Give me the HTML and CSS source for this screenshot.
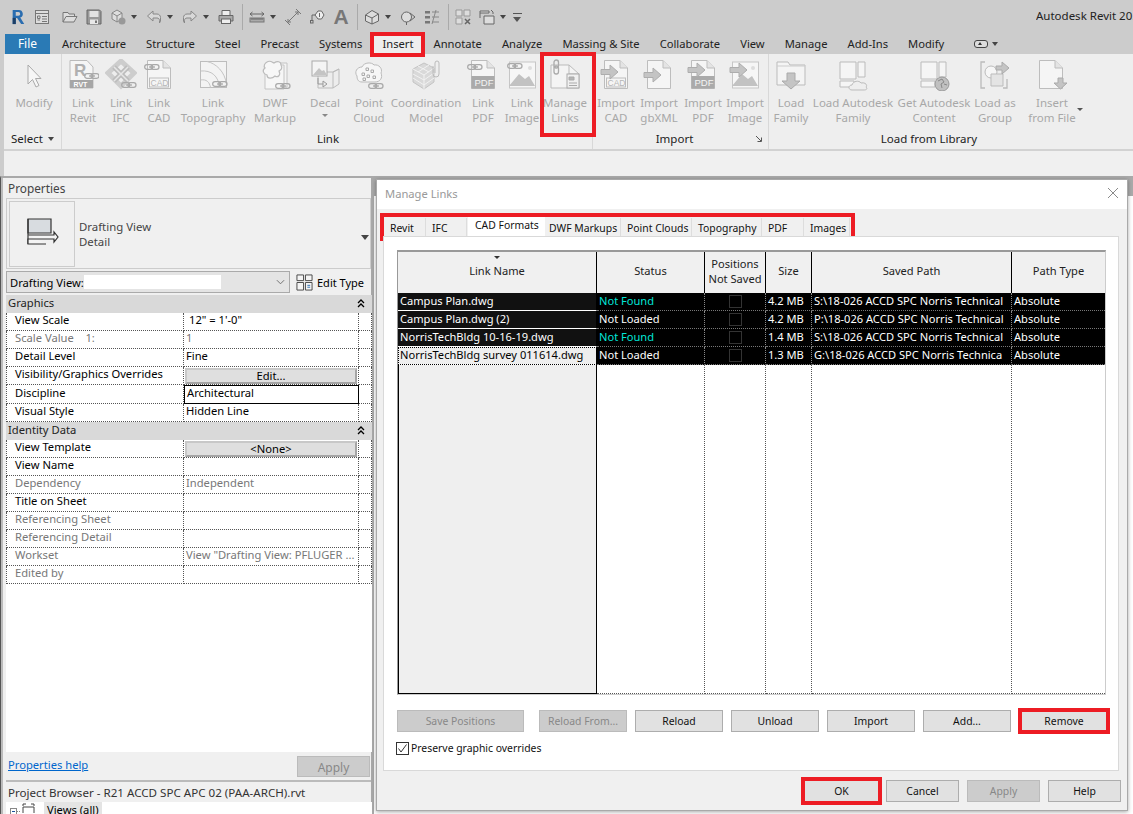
FILE: index.html
```html
<!DOCTYPE html>
<html lang="en">
<head>
<meta charset="utf-8">
<title>Manage Links</title>
<link rel="stylesheet" href="styles.css">
</head>
<body>
<svg class="defs" aria-hidden="true">
  <defs>
    <g id="chain" fill="none" stroke="#a9a9a9" stroke-width="1.3"><rect x=".7" y=".7" width="8" height="4.6" rx="2.3"/><rect x="7" y=".7" width="8" height="4.6" rx="2.3"/><path d="M5 3h6"/></g>
    <g id="doc"><path d="M4.5 1.5H20L27.5 9V29.5H4.5Z" fill="#f5f5f5" stroke="#bdbdbd"/><path d="M20 1.5V9H27.5" fill="#e4e4e4" stroke="#bdbdbd"/></g>
    <g id="arrowr"><path d="M1 10.5H10V6L18 13L10 20V15.5H1Z" fill="#c4c4c4" stroke="#adadad"/></g>
    <g id="mount"><path d="M3 27 13 15l6 5 4-3 6 10Z" fill="#c2c2c2"/></g>
  </defs>
</svg>
<div class="page">
  <header class="qat">
    <svg class="qi" viewBox="0 0 16 18"><path d="M2 1h7a4.500 4.500 0 0 1 1.500 8.700L15 17h-3.500L7 10H5.500v7H2Z" fill="#2a6db0"/><path d="M2 10h3.500v7H2Z" fill="#1c3e66"/><path d="M5.500 3.500v4H8.500a2 2 0 0 0 0-4Z" fill="#ccc"/></svg>
    <svg class="qi" viewBox="0 0 16 16"><rect x="1.500" y="1.500" width="13" height="13" fill="#ddd" stroke="#777"/><path d="M1.500 4.500h13M3.500 7h2.500v2.500H3.500ZM3.500 11h2.500M8 7.500h5M8 10h5M8 12.500h5" stroke="#777" fill="none"/></svg>
    <svg class="qi sp4" viewBox="0 0 16 16"><path d="M1 13V3.500h5l1 1.500h5.500v2.500M1 13l3-5.500h11L12 13Z" fill="#ddd" stroke="#777"/></svg>
    <svg class="qi" viewBox="0 0 16 16"><path d="M1 1h12.500L15 2.500V15H1Z" fill="#999" stroke="#666"/><rect x="3.500" y="2" width="9" height="6" fill="#e2e2e2"/><rect x="4" y="10.500" width="8" height="4.500" fill="#e8e8e8"/><rect x="9" y="11.500" width="2" height="2.500" fill="#777"/></svg>
    <svg class="qi" viewBox="0 0 16 16"><path d="M2 4l5-3 5 3v6l-5 3-5-3Z" fill="#ddd" stroke="#888"/><path d="M2 4l5 3 5-3M7 7v6" fill="none" stroke="#888"/><circle cx="12" cy="12" r="3.500" fill="#999"/></svg>
    <i class="caret"></i>
    <svg class="qi" viewBox="0 0 16 16"><path d="M7 2 1.500 7 7 12V9h4c1.500 0 2.500 1 2.500 2.500V14l1-2V8.500C14.500 6.500 13 5 11 5H7Z" fill="#d8d8d8" stroke="#888"/></svg>
    <i class="caret"></i>
    <svg class="qi" viewBox="0 0 16 16"><path d="M9 2 14.500 7 9 12V9H5c-1.500 0-2.500 1-2.500 2.500V14l-1-2V8.500C1.500 6.500 3 5 5 5h4Z" fill="#d8d8d8" stroke="#888"/></svg>
    <i class="caret"></i>
    <svg class="qi" viewBox="0 0 16 16"><path d="M4 6V1.500h8V6" fill="#eee" stroke="#666"/><path d="M1 6.500h14V12H1Z" fill="#aaa" stroke="#666"/><rect x="3.500" y="10" width="9" height="4.500" fill="#eee" stroke="#666"/></svg>
    <i class="qsep"></i>
    <svg class="qi" viewBox="0 0 16 16"><path d="M1 5h14M3.500 3 1 5l2.500 2M12.500 3 15 5l-2.500 2" fill="none" stroke="#666"/><rect x="1" y="9" width="14" height="4" fill="#aaa" stroke="#777"/><path d="M3 9v2M5 9v2M7 9v2M9 9v2M11 9v2M13 9v2" stroke="#666"/></svg>
    <i class="caret"></i>
    <svg class="qi" viewBox="0 0 16 16"><path d="M3 13 13 3M6 13H3v-3M10 3h3v3M0 11l5 5M11 0l5 5" fill="none" stroke="#777"/></svg>
    <svg class="qi" viewBox="0 0 16 16"><path d="M3 12V6h3" fill="none" stroke="#666"/><rect x="1.500" y="11.500" width="2.500" height="2.500" fill="none" stroke="#666"/><path d="M6 6l3-4h3.500L15 6l-2.500 4H9Z" fill="#eee" stroke="#666"/><path d="M10.500 4v4" stroke="#666"/></svg>
    <span class="qa">A</span>
    <i class="qsep"></i>
    <svg class="qi" viewBox="0 0 16 16"><path d="M1.500 6 8 1.500 14.500 5v7L8 15l-6.500-3Z" fill="#ddd" stroke="#666"/><path d="M1.500 6 8 9l6.500-4M8 9v6" fill="none" stroke="#666"/></svg>
    <i class="caret"></i>
    <svg class="qi" viewBox="0 0 16 16"><circle cx="6.500" cy="8" r="5" fill="#ddd" stroke="#666"/><path d="M10 4l5 4-5 4M6.500 13v3" fill="none" stroke="#666"/></svg>
    <svg class="qi" viewBox="0 0 16 16"><path d="M1 2h5v2.500H1ZM1 7h5v2.500H1ZM1 12h5v2.500H1Z" fill="#777"/><path d="M8 3h7M8 8h7M8 13h7M12 1 8 15" fill="none" stroke="#888"/></svg>
    <i class="qsep"></i>
    <svg class="qi" viewBox="0 0 16 16"><path d="M1 1h6v6H1ZM9 1h6v6H9ZM1 9h6v6H1Z" fill="#ddd" stroke="#999"/><path d="M10 10l5 5M15 10l-5 5" stroke="#666" stroke-width="1.500"/></svg>
    <svg class="qi" viewBox="0 0 16 16"><path d="M1 2h9v2H1ZM5 7h10v8H5Z" fill="#ddd" stroke="#666"/><path d="M1 4v5M12 1l2 2v2" fill="none" stroke="#666"/></svg>
    <i class="caret"></i>
    <span class="qmenu"></span>
    <div class="apptitle">Autodesk Revit 20.</div>
  </header>

  <nav class="tabs">
    <a class="file">File</a>
    <a>Architecture</a><a>Structure</a><a>Steel</a><a>Precast</a><a>Systems</a>
    <a class="active hl">Insert</a>
    <a>Annotate</a><a>Analyze</a><a>Massing &amp; Site</a><a>Collaborate</a><a>View</a><a>Manage</a><a>Add-Ins</a><a>Modify</a>
    <span class="minimize"><i></i></span><i class="caret tabcaret"></i>
  </nav>

  <section class="ribbon">
    <div class="panel p-select">
      <div class="tools">
        <div class="tool w40">
          <svg class="ric" viewBox="0 0 32 32"><path d="M10 6V25L14.500 20.500 18 28 21 26.500 17.500 19.500H23Z" fill="#f6f6f6" stroke="#aaa"/></svg>
          <span>Modify</span>
        </div>
      </div>
      <div class="ptitle">Select<i class="caret"></i></div>
    </div>
    <div class="panel p-link">
      <div class="tools">
        <div class="tool w38">
          <svg class="ric" viewBox="0 0 32 32"><path d="M3 1.500H20L26 8V29H3Z" fill="#f5f5f5" stroke="#bbb"/><text class="glyph-p" x="7" y="17">R</text><rect x="3" y="21" width="23" height="8" fill="#a6a6a6"/><text class="glyph-w" x="6.500" y="28">RVT</text><use href="#chain" x="17" y="14"/></svg>
          <span>Link<br>Revit</span>
        </div>
        <div class="tool w38">
          <svg class="ric" viewBox="0 0 32 32"><path d="M16 2 29 14 16 27 3 14Z" fill="none" stroke="#cdcdcd" stroke-width="5"/><path d="M9 8l14 14M23 8 9 22" stroke="#bdbdbd" stroke-width="5" fill="none"/><path d="M9 8l14 14M23 8 9 22" stroke="#e6e6e6" stroke-width="1.500" fill="none"/><use href="#chain" x="16" y="23"/></svg>
          <span>Link<br>IFC</span>
        </div>
        <div class="tool w38">
          <svg class="ric" viewBox="0 0 32 32"><use href="#doc"/><rect x="6.500" y="19" width="19" height="9" fill="none" stroke="#bdbdbd"/><text class="glyph-c" x="7.500" y="27">CAD</text><use href="#chain" x="1" y="5"/></svg>
          <span>Link<br>CAD</span>
        </div>
        <div class="tool w70">
          <svg class="ric" viewBox="0 0 32 32"><rect x="3.500" y="2.500" width="26" height="26" fill="#f3f3f3" stroke="#bdbdbd"/><path d="M3.500 21c6-1 9 2 10 7.500M3.500 12c11-1 18 5 19 16.500M10 2.500c9 2 18 10 19.500 23" fill="none" stroke="#c4c4c4"/><use href="#chain" x="15" y="22"/></svg>
          <span>Link<br>Topography</span>
        </div>
        <div class="tool w54">
          <svg class="ric" viewBox="0 0 32 32"><path d="M9 4h19v24H9Z" fill="#f3f3f3" stroke="#c4c4c4"/><path d="M6 6h19v24H6Z" fill="#f6f6f6" stroke="#c4c4c4"/><path d="M8 3c3-2 5 0 7 1 3-2 7-2 7 2 2 3 0 5-2 6 2 4-1 7-4 5-3 3-8 3-8-1-4-1-5-5-2-7-2-2 0-5 2-6Z" fill="#f7f7f7" stroke="#bbb" stroke-width="1.200"/><use href="#chain" x="16" y="24"/></svg>
          <span>DWF<br>Markup</span>
        </div>
        <div class="tool w46">
          <svg class="ric" viewBox="0 0 32 32"><path d="M9 13h15l6-3v15l-6 4H9Z" fill="#ededed" stroke="#bbb"/><path d="M24 13v16M24 13l6-3" fill="none" stroke="#bbb"/><rect x="3" y="2" width="15" height="15" fill="#f4f4f4" stroke="#aaa"/><path d="M4 16l6-7 3 3 2-1 3 5Z" fill="#c4c4c4"/><path d="M9 19v6h5M14 22l4 3-4 3Z" fill="none" stroke="#999"/></svg>
          <span>Decal<br><b class="minicaret"></b></span>
        </div>
        <div class="tool w42">
          <svg class="ric" viewBox="0 0 32 32"><path d="M4 17c-3-4 0-9 5-9 2-5 10-5 12-2 5-1 9 4 7 8 2 5-1 9-6 9H9c-4 0-5-3-5-6Z" fill="#f6f6f6" stroke="#bbb"/><path d="M9 14h2.500v2.500H9ZM13 9h2.500v2.500H13ZM18 11h2.500v2.500H18ZM14 16h2.500v2.500H14ZM20 17h2.500v2.500H20ZM10 19h2.500v2.500H10Z" fill="none" stroke="#aaa"/><use href="#chain" x="15" y="24"/></svg>
          <span>Point<br>Cloud</span>
        </div>
        <div class="tool w72">
          <svg class="ric" viewBox="0 0 32 32"><path d="M14 4 24 9v14l-10 7L3 23V10Z" fill="#d9d9d9" stroke="#c4c4c4"/><path d="M3 10l11 6 10-7M14 16v14M3 15l11 6 10-7M3 19l11 7 10-7M8 7l11 6M19 6 8 13" fill="none" stroke="#f2f2f2"/><path d="M25 14V4a2 2 0 0 1 4 0v11a3 3 0 0 1-6 0V7" fill="none" stroke="#bbb"/></svg>
          <span>Coordination<br>Model</span>
        </div>
        <div class="tool w42">
          <svg class="ric" viewBox="0 0 32 32"><use href="#doc"/><rect x="4.500" y="17" width="23" height="12.500" fill="#aaa"/><text class="glyph-w2" x="7.500" y="27">PDF</text><use href="#chain" x="0" y="5"/></svg>
          <span>Link<br>PDF</span>
        </div>
        <div class="tool w36">
          <svg class="ric" viewBox="0 0 32 32"><rect x="3.500" y="3" width="26" height="26" fill="#f6f6f6" stroke="#c6c6c6"/><circle cx="24" cy="9" r="2" fill="#ddd"/><use href="#mount"/><use href="#chain" x="1" y="4"/></svg>
          <span>Link<br>Image</span>
        </div>
        <div class="tool manage hl">
          <svg class="ric" viewBox="0 0 32 32"><path d="M2 6H20L30 15V29H2Z" fill="#f4f4f4" stroke="#bbb"/><path d="M20 6v9h10" fill="none" stroke="#bbb"/><rect x="18" y="15" width="12" height="14" fill="#f0f0f0" stroke="#aaa"/><path d="M20 18h5v3h-5ZM20 24h8M20 26.500h8" fill="#b5b5b5" stroke="#aaa"/><g fill="none" stroke="#aaa" stroke-width="1.300"><rect x="5" y="1" width="4.500" height="8" rx="2.200"/><rect x="5" y="7" width="4.500" height="8" rx="2.200"/></g></svg>
          <span>Manage<br>Links</span>
        </div>
      </div>
      <div class="ptitle">Link</div>
    </div>
    <div class="panel p-import">
      <div class="tools">
        <div class="tool w42">
          <svg class="ric" viewBox="0 0 32 32"><use href="#doc"/><rect x="6.500" y="19" width="19" height="9" fill="none" stroke="#bdbdbd"/><text class="glyph-c" x="7.500" y="27">CAD</text><use href="#arrowr" x="0" y="0"/></svg>
          <span>Import<br>CAD</span>
        </div>
        <div class="tool w44">
          <svg class="ric" viewBox="0 0 32 32"><use href="#doc"/><use href="#arrowr" x="0" y="3"/></svg>
          <span>Import<br>gbXML</span>
        </div>
        <div class="tool w44">
          <svg class="ric" viewBox="0 0 32 32"><use href="#doc"/><rect x="4.500" y="17" width="23" height="12.500" fill="#aaa"/><text class="glyph-w2" x="7.500" y="27">PDF</text><use href="#arrowr" x="0" y="-2"/></svg>
          <span>Import<br>PDF</span>
        </div>
        <div class="tool w40">
          <svg class="ric" viewBox="0 0 32 32"><rect x="3.500" y="3" width="26" height="26" fill="#f6f6f6" stroke="#c6c6c6"/><circle cx="24" cy="9" r="2" fill="#ddd"/><use href="#mount"/><use href="#arrowr" x="0" y="-2"/></svg>
          <span>Import<br>Image</span>
        </div>
      </div>
      <div class="ptitle">Import<svg class="launcher" viewBox="0 0 8 8"><path d="M1 1l5 5M2.500 6.500h4v-4" fill="none" stroke="#555"/></svg></div>
    </div>
    <div class="panel p-library">
      <div class="tools">
        <div class="tool w44">
          <svg class="ric" viewBox="0 0 32 32"><path d="M2 26V3h11l2 3h15v20Z" fill="#f4f4f4" stroke="#bbb"/><path d="M2 7h28" stroke="#ccc"/><path d="M12 14h8v8h5l-9 8-9-8h5Z" fill="#c4c4c4" stroke="#aaa"/></svg>
          <span>Load<br>Family</span>
        </div>
        <div class="tool w80">
          <svg class="ric" viewBox="0 0 32 32"><path d="M3 3h16v17H3ZM21 3h7v15h-7ZM3 22h14v6H3Z" fill="#f5f5f5" stroke="#bbb"/><path d="M15 31c-4 0-4-5 0-5 1-4 7-5 9-2 4-1 7 2 5 4 2 2 0 3-2 3Z" fill="#eee" stroke="#bbb"/></svg>
          <span>Load Autodesk<br>Family</span>
        </div>
        <div class="tool w82">
          <svg class="ric" viewBox="0 0 32 32"><path d="M3 3h16v17H3ZM21 3h7v15h-7ZM3 22h14v6H3Z" fill="#f5f5f5" stroke="#bbb"/><circle cx="24" cy="25" r="7" fill="#c0c0c0" stroke="#999"/><path d="M20 22l4-2 2 3-3 2 1 4M26 25l3 1" fill="none" stroke="#888"/></svg>
          <span>Get Autodesk<br>Content</span>
        </div>
        <div class="tool w40">
          <svg class="ric" viewBox="0 0 32 32"><path d="M6 3H2v26h4M24 29h4V20" fill="none" stroke="#bbb" stroke-width="1.300"/><circle cx="12" cy="13" r="6" fill="#f6f6f6" stroke="#bbb"/><path d="M12 15h12v12H12Z" fill="#e4e4e4" stroke="#bbb"/><path d="M17 7h6V3l7 6-7 6v-4h-6Z" fill="#c4c4c4" stroke="#aaa"/></svg>
          <span>Load as<br>Group</span>
        </div>
        <div class="tool w74">
          <svg class="ric" viewBox="0 0 32 32"><use href="#doc" x="-1"/><path d="M22 19h5v5h4l-6.500 6-6.500-6h4Z" fill="#c4c4c4" stroke="#aaa"/></svg>
          <span>Insert<br>from File</span>
          <b class="filecaret"></b>
        </div>
      </div>
      <div class="ptitle">Load from Library</div>
    </div>
  </section>
  <div class="optbar"></div>

  <main class="workspace">
    <aside class="props">
      <div class="ph">Properties</div>
      <div class="typesel">
        <div class="thumb">
          <svg width="34" height="32" viewBox="0 0 34 32"><path d="M3 1h23v14H3Z" fill="#d8dce0" stroke="#333" stroke-width="1.200"/><path d="M3 1v25" stroke="#333" stroke-width="1.200"/><path d="M3 17h26v-3l4 5-4 5v-3H3v5h18" fill="#f4f4f4" stroke="#333" stroke-width="1.200"/></svg>
        </div>
        <div class="typetext">Drafting View<br>Detail</div>
        <i class="caret dark"></i>
      </div>
      <div class="combo-row">
        <div class="combo">
          <span>Drafting View:</span><span class="mask"></span>
          <svg class="chev" viewBox="0 0 10 6"><path d="M1 1l4 4 4-4" fill="none" stroke="#666"/></svg>
        </div>
        <svg class="edit-ic" viewBox="0 0 18 18"><path d="M1 1h7v6H1ZM10 1h7v6h-7ZM1 9h7v8H1ZM10 9h7v8h-7Z" fill="#f4f4f4" stroke="#444"/><path d="M12 12h3M12 14h3" stroke="#2a6db0"/></svg>
        <span class="edit-type">Edit Type</span>
      </div>
      <div class="tablewrap">
        <table class="ptable">
          <colgroup><col class="c1"><col class="c2"><col class="c3"></colgroup>
          <tr class="sect"><td colspan="3">Graphics<svg class="dbl" viewBox="0 0 8 10"><path d="M1 4l3-3 3 3M1 8l3-3 3 3" fill="none" stroke="#000" stroke-width="1.300"/></svg></td></tr>
          <tr><td>View Scale</td><td><span class="indent">12" = 1'-0"</span></td><td></td></tr>
          <tr class="off"><td>Scale Value &nbsp;&nbsp; 1:</td><td>1</td><td></td></tr>
          <tr><td>Detail Level</td><td>Fine</td><td></td></tr>
          <tr><td>Visibility/Graphics Overrides</td><td class="btncell"><span class="cellbtn">Edit...</span></td><td></td></tr>
          <tr><td>Discipline</td><td class="focus">Architectural</td><td></td></tr>
          <tr><td>Visual Style</td><td>Hidden Line</td><td></td></tr>
          <tr class="sect"><td colspan="3">Identity Data<svg class="dbl" viewBox="0 0 8 10"><path d="M1 4l3-3 3 3M1 8l3-3 3 3" fill="none" stroke="#000" stroke-width="1.300"/></svg></td></tr>
          <tr><td>View Template</td><td class="btncell"><span class="cellbtn">&lt;None&gt;</span></td><td></td></tr>
          <tr><td>View Name</td><td></td><td></td></tr>
          <tr class="off"><td>Dependency</td><td>Independent</td><td></td></tr>
          <tr><td>Title on Sheet</td><td></td><td></td></tr>
          <tr class="off"><td>Referencing Sheet</td><td></td><td></td></tr>
          <tr class="off"><td>Referencing Detail</td><td></td><td></td></tr>
          <tr class="off"><td>Workset</td><td>View "Drafting View: PFLUGER ...</td><td></td></tr>
          <tr class="off"><td>Edited by</td><td></td><td></td></tr>
        </table>
      </div>
      <div class="pfoot"><a class="helplink">Properties help</a><span class="applybtn">Apply</span></div>
      <div class="pb-title">Project Browser - R21 ACCD SPC APC 02 (PAA-ARCH).rvt</div>
      <div class="pb-tree">
        <svg class="pb-ic" viewBox="0 0 26 12"><rect x=".5" y="5.500" width="6" height="6" fill="#fff" stroke="#888"/><path d="M2 8.500h3" stroke="#1b4f9c"/><path d="M7 8.500h3" stroke="#888" stroke-dasharray="1 1"/><path d="M13 3V1h3M21 1h3v2M13 10V4h11v6" fill="none" stroke="#444"/></svg>
        <span class="pb-sel">Views (all)</span>
      </div>
    </aside>

    <section class="dialog">
      <div class="dtitle"><span>Manage Links</span>
        <svg class="dclose" viewBox="0 0 10 10"><path d="M0 0l10 10M10 0 0 10" stroke="#8a8a8a" fill="none"/></svg>
      </div>
      <div class="dbody">
        <div class="dtabs hl">
          <span class="dtab t41">Revit</span>
          <span class="dtab t40">IFC</span>
          <span class="dtab t77 on">CAD Formats</span>
          <span class="dtab t75 tight">DWF Markups</span>
          <span class="dtab t70">Point Clouds</span>
          <span class="dtab t69">Topography</span>
          <span class="dtab t41">PDF</span>
          <span class="dtab t45">Images</span>
        </div>
        <div class="tabpage">
          <table class="grid">
            <colgroup><col class="g1"><col class="g2"><col class="g3"><col class="g4"><col class="g5"><col class="g6"></colgroup>
            <tr class="ghead">
              <th class="sorted">Link Name</th><th>Status</th><th>Positions<br>Not Saved</th><th>Size</th><th>Saved Path</th><th>Path Type</th>
            </tr>
            <tr>
              <td class="name">Campus Plan.dwg</td><td class="cy">Not Found</td><td class="chk"><i></i></td><td>4.2 MB</td><td>S:\18-026 ACCD SPC Norris Technical</td><td>Absolute</td>
            </tr>
            <tr>
              <td class="name">Campus Plan.dwg (2)</td><td>Not Loaded</td><td class="chk"><i></i></td><td>4.2 MB</td><td>P:\18-026 ACCD SPC Norris Technical</td><td>Absolute</td>
            </tr>
            <tr>
              <td class="name">NorrisTechBldg 10-16-19.dwg</td><td class="cy">Not Found</td><td class="chk"><i></i></td><td>1.4 MB</td><td>S:\18-026 ACCD SPC Norris Technical</td><td>Absolute</td>
            </tr>
            <tr>
              <td class="name cur">NorrisTechBldg survey 011614.dwg</td><td>Not Loaded</td><td class="chk"><i></i></td><td>1.3 MB</td><td>G:\18-026 ACCD SPC Norris Technica</td><td>Absolute</td>
            </tr>
            <tr class="filler"><td></td><td></td><td></td><td></td><td></td><td></td></tr>
          </table>
          <div class="actions">
            <span class="btn off b127">Save Positions</span>
            <span class="btn off b88 gapl">Reload From...</span>
            <span class="btn b88">Reload</span>
            <span class="btn b88">Unload</span>
            <span class="btn b88">Import</span>
            <span class="btn b88">Add...</span>
            <span class="btn b88 hl remove">Remove</span>
          </div>
          <label class="preserve">
            <svg class="cb" viewBox="0 0 13 13"><rect x=".5" y=".5" width="12" height="12" fill="#fff" stroke="#333"/><path d="M2.500 6.500 5 10l5.500-7.500" fill="none" stroke="#333"/></svg>
            <span>Preserve graphic overrides</span>
          </label>
        </div>
        <div class="dfoot">
          <span class="btn b75 hl ok">OK</span>
          <span class="btn b73">Cancel</span>
          <span class="btn off b73">Apply</span>
          <span class="btn b73">Help</span>
        </div>
      </div>
    </section>
  </main>
</div>
</body>
</html>
```
FILE: styles.css
```css
* { box-sizing: border-box; }
html, body { margin: 0; padding: 0; }
body { font: 11.5px/15px "Noto Sans", "Liberation Sans", sans-serif; color: #000; background: #fff; }
.defs { position: absolute; width: 0; height: 0; }
.page { width: 1133px; height: 814px; overflow: hidden; background: #ccc; }

/* quick access toolbar */
.qat { height: 34px; display: flex; align-items: center; gap: 8px; padding-left: 10px; }
.qi { width: 16px; height: 16px; flex: none; }
.sp4 { margin-left: 4px; }
.caret { display: inline-block; width: 0; height: 0; border: 3.5px solid transparent; border-top: 4px solid #444; border-bottom: 0; flex: none; }
.qat .caret { margin: 0 1px 0 -3px; }
.qsep { width: 1px; height: 26px; background: #aaa; flex: none; margin-right: -2px; }
.qa { width: 16px; font: bold 21px/20px "Liberation Sans", sans-serif; color: #777; text-align: center; flex: none; }
.qmenu { width: 9px; height: 8px; margin-left: -2px; border-top: 1px solid #555; position: relative; flex: none; }
.qmenu::after { content: ""; position: absolute; left: 0; top: 3px; border: 4.5px solid transparent; border-top: 5px solid #555; border-bottom: 0; }
.apptitle { margin-left: auto; margin-top: -4px; width: 97px; flex: none; overflow: hidden; white-space: nowrap; color: #222; }

/* ribbon tabs */
.tabs { height: 20px; display: flex; gap: 20px; align-items: center; padding-left: 5px; color: #222; white-space: nowrap; font-size: 11.2px; }
.tabs a { margin-top: -2px; }
.tabs .file { width: 45px; height: 20px; line-height: 20px; margin: 0 -8px 0 0; background: #2a7ab5; color: #fff; text-align: center; font-size: 12px; }
.tabs .active { height: 17px; padding: 0 8px; margin: 0 -8px; line-height: 15px; background: #eee; }
.minimize { width: 14px; height: 8px; margin-left: 10px; margin-right: -16px; border: 1px solid #444; border-radius: 3px; background: #ddd; position: relative; }
.minimize i { position: absolute; left: 3px; top: 1px; border: 2.500px solid transparent; border-bottom: 3px solid #333; border-top: 0; }
.hl { outline: 4px solid #ed1c24; }

/* ribbon */
.ribbon { height: 97px; margin-left: 4px; display: flex; background: #eee; border-bottom: 2px solid #d2d2d2; }
.panel { display: flex; flex-direction: column; border-right: 1px solid #d8d8d8; }
.p-select { width: 58px; padding-left: 10px; }
.p-link { width: 531px; padding-left: 2px; }
.p-import { width: 176px; padding-left: 2px; }
.p-library { width: 320px; border-right: 0; }
.tools { display: flex; height: 76px; flex: none; }
.tool { flex: none; text-align: center; color: #a8a8a8; margin-top: 2px; height: 77px; padding-top: 3px; position: relative; white-space: nowrap; display: flex; flex-direction: column; align-items: center; }
.tool span { display: block; margin-top: 4px; line-height: 15px; }
.ric { width: 32px; height: 32px; flex: none; }
.w36 { width: 36px; } .w38 { width: 38px; } .w40 { width: 40px; } .w42 { width: 42px; } .w44 { width: 44px; }
.w46 { width: 46px; } .w54 { width: 54px; } .w70 { width: 70px; } .w72 { width: 72px; } .w74 { width: 74px; }
.w80 { width: 80px; } .w82 { width: 82px; }
.manage { width: 48px; margin-left: 4px; padding-right: 6px; }
.ptitle { height: 17px; line-height: 17px; text-align: center; color: #222; position: relative; }
.p-select .ptitle { text-align: left; margin-left: -3px; }
.p-select .caret { margin-left: 5px; vertical-align: 2px; }
.p-import .ptitle { padding-right: 14px; }
.launcher { position: absolute; right: 5px; top: 5px; width: 8px; height: 8px; }
.minicaret { display: inline-block; border: 3px solid transparent; border-top: 3.500px solid #888; border-bottom: 0; vertical-align: 5px; }
.filecaret { position: absolute; right: 6px; top: 52px; border: 3px solid transparent; border-top: 3.500px solid #555; border-bottom: 0; }
.glyph-p { font: bold 17px "Liberation Sans", sans-serif; fill: #b0b0b0; }
.glyph-w { font: bold 7px "Liberation Sans", sans-serif; fill: #fff; }
.glyph-w2 { font: 9.500px "Liberation Sans", sans-serif; fill: #f4f4f4; }
.glyph-c { font: 8.500px "Liberation Sans", sans-serif; fill: #b5b5b5; }

.optbar { height: 25px; margin-left: 4px; background: #f0f0f0; }

/* workspace */
.workspace { height: 638px; display: flex; align-items: flex-start; background: linear-gradient(#aaa 18px, #fff 18px); border-top: 2px solid #a9a9a9; border-left: 1px solid #555; }

/* properties */
.props { width: 373px; height: 636px; flex: none; padding-left: 3px; background: #f0f0f0; border-left: 2px solid #bbb; border-right: 3px solid #a9a9a9; display: flex; flex-direction: column; font-size: 11.2px; }
.ph { height: 20px; line-height: 21px; color: #444; padding-left: 2px; font-size: 11.8px; }
.typesel { height: 71px; width: 365px; border: 1px solid #ccc; display: flex; align-items: center; background: #f0f0f0; position: relative; flex: none; }
.thumb { width: 66px; height: 66px; margin-left: 2px; border: 1px solid #ccc; display: flex; align-items: center; justify-content: center; flex: none; }
.typetext { margin-left: 4px; color: #444; font-size: 11.4px; }
.typesel .dark { position: absolute; right: 1px; top: 36px; border-width: 4px; border-top-width: 5px; border-bottom-width: 0; }
.combo-row { display: flex; align-items: center; height: 22px; margin-top: 2px; flex: none; }
.combo { width: 284px; height: 22px; border: 1px solid #aaa; background: #e4e4e4; display: flex; align-items: center; padding-left: 3px; flex: none; }
.mask { width: 137px; height: 14px; background: #fff; }
.chev { width: 9px; height: 6px; margin-left: auto; margin-right: 4px; }
.edit-ic { width: 17px; height: 17px; margin-left: 6px; flex: none; }
.edit-type { margin-left: 4px; white-space: nowrap; font-size: 11px; }
.tablewrap { margin-top: 2px; height: 457px; background: #fff; flex: none; width: 366px; }
.ptable { width: 366px; table-layout: fixed; border-collapse: separate; border-spacing: 0; }
.ptable .c1 { width: 178px; } .ptable .c2 { width: 175px; } .ptable .c3 { width: 13px; }
.ptable td { height: 18px; padding: 0 0 3px 2px; line-height: 14px; white-space: nowrap; overflow: hidden; border-right: 1px dotted #555; border-bottom: 1px dotted #555; background: #fff; }
.ptable td:first-child { padding-left: 8px; border-left: 1px dotted #555; }
.ptable .sect td { background: #d9d9d9; border: 0; padding-left: 2px; color: #222; position: relative; }
.dbl { position: absolute; right: 7px; top: 4px; width: 8px; height: 10px; }
.ptable .off td { color: #777; }
.indent { padding-left: 3px; }
.ptable td.btncell { padding: 0 0 0 1px; text-align: center; }
.cellbtn { display: block; width: 172px; height: 16px; line-height: 11px; background: #dfdfdf; border: 2px solid #a5a5a5; border-top-color: #c8c8c8; border-left-color: #c8c8c8; }
.ptable td.focus { border: 1px solid #000; }
.pfoot { height: 28px; display: flex; align-items: center; justify-content: space-between; padding: 0 3px 0 2px; flex: none; width: 367px; }
.helplink { color: #0066cc; text-decoration: underline; margin-top: -3px; }
.applybtn { width: 73px; height: 21px; line-height: 21px; text-align: center; background: #ccc; border: 1px solid #bbb; color: #888; font-size: 12px; }
.pb-title { height: 22px; line-height: 22px; border-top: 2px solid #bbb; padding-left: 2px; white-space: nowrap; color: #333; flex: none; font-size: 11.6px; }
.pb-tree { height: 12px; background: #fff; display: flex; align-items: flex-start; width: 366px; padding-left: 4px; flex: none; overflow: hidden; }
.pb-ic { width: 26px; height: 12px; margin-top: 1px; }
.pb-sel { margin-left: 8px; padding: 0 3px; background: #e4e4e4; line-height: 16px; height: 16px; }

/* dialog */
.dialog { width: 752px; height: 632px; margin-left: 2px; margin-top: 1px; background: #f0f0f0; border: 1px solid #a9a9a9; box-shadow: 0 1px 4px rgba(0,0,0,.35); flex: none; display: flex; flex-direction: column; font-size: 10.4px; }
.dtitle { height: 29px; background: #fff; display: flex; align-items: center; justify-content: space-between; padding: 0 9px 3px 8px; color: #999; flex: none; font-size: 11.2px; }
.dclose { width: 10px; height: 10px; }
.dbody { flex: 1; display: flex; flex-direction: column; min-height: 0; }
.dtabs { display: flex; gap: 1px; height: 18px; margin: 9px 0 0 8px; width: 465px; background: #f0f0f0; flex: none; align-items: flex-end; outline-offset: 1px; }
.dtab { height: 18px; line-height: 20px; padding-left: 5px; background: #f0f0f0; border-right: 1px solid #ddd; white-space: nowrap; color: #111; flex: none; }
.dtab.on { height: 20px; line-height: 19px; padding-left: 7px; margin-top: -2px; background: #fff; border: 0; }
.dtab.tight { padding-left: 3px; }
.t40 { width: 40px; } .t41 { width: 41px; } .t45 { width: 45px; } .t69 { width: 69px; } .t70 { width: 70px; } .t75 { width: 75px; } .t77 { width: 77px; }
.tabpage { width: 736px; height: 535px; margin-left: 6px; background: #fff; border: 1px solid #d9d9d9; padding: 13px 0 0 13px; flex: none; }
.grid { width: 709px; height: 445px; table-layout: fixed; border-collapse: separate; border-spacing: 0; border-top: 2px solid #999; border-left: 1px solid #999; border-right: 1px solid #ccc; border-bottom: 1px solid #ccc; font-size: 11.1px; }
.g1 { width: 199px; } .g2 { width: 108px; } .g3 { width: 61px; } .g4 { width: 46px; } .g5 { width: 200px; } .g6 { width: 93px; }
.ghead th { height: 41px; padding: 0 0 4px; background: #f0f0f0; font-weight: 400; text-align: center; border-right: 1px solid #000; position: relative; color: #222; }
.ghead th:last-child { border-right: 0; }
.sorted::before { content: ""; position: absolute; left: 96px; top: 4px; border: 3px solid transparent; border-top: 3px solid #333; border-bottom: 0; }
.grid td { height: 18px; padding: 0 0 2px 2px; background: #000; color: #fff; white-space: nowrap; overflow: hidden; border-right: 1px dotted #888; border-bottom: 1px dotted #777; line-height: 14px; }
.grid td:last-child { border-right: 0; }
.grid td.name { background: #111; border-right: 1px solid #000; border-bottom: 1px solid #fff; }
.grid td.name.cur { background: #eee; color: #000; outline: 1px dotted #000; outline-offset: -1px; }
.grid td.cy { color: #00e6d8; }
.grid td.chk { text-align: center; padding: 0; }
.chk i { display: block; width: 13px; height: 13px; margin: 0 auto; border: 1px solid #333; }
.grid .filler td { height: auto; background: #fff; border-right: 1px dotted #555; border-bottom: 1px dotted #555; }
.grid .filler td:first-child { background: #efefef; border-right: 1px solid #000; border-bottom: 1px solid #000; border-left: 1px solid #000; }
.grid .filler td:last-child { border-right: 0; }
.actions { display: flex; gap: 8px; margin-top: 15px; height: 22px; }
.btn { height: 22px; line-height: 20px; text-align: center; background: #e1e1e1; border: 1px solid #adadad; flex: none; white-space: nowrap; color: #111; }
.btn.off { background: #ccc; border-color: #bbb; color: #888; }
.b127 { width: 127px; } .b88 { width: 88px; } .b75 { width: 75px; } .b73 { width: 73px; }
.gapl { margin-left: 7px; }
.remove { margin-left: 1px; outline-offset: -2px; }
.preserve { display: flex; align-items: center; margin-top: 10px; gap: 2px; height: 13px; margin-left: -1px; color: #111; }
.cb { width: 13px; height: 13px; flex: none; }
.dfoot { display: flex; gap: 8px; margin-top: 9px; height: 22px; justify-content: flex-end; padding-right: 6px; }
.ok { margin-right: -1px; outline-offset: -1px; }
```
